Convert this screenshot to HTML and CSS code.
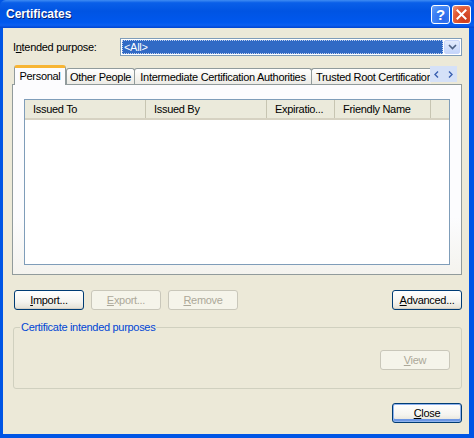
FILE: index.html
```html
<!DOCTYPE html>
<html lang="en">
<head>
    <meta charset="UTF-8">
    <title>Certificates</title>
    <link rel="stylesheet" href="styles.css">
</head>
<body>
    <div class="window">
        <div class="titlebar">
            <span class="title">Certificates</span>
            <div class="title-buttons">
                <span class="tbtn help">?</span>
                <span class="tbtn close">
                    <svg width="11" height="11" viewBox="0 0 11 11"><path d="M1.5 1.5 L9.5 9.5 M9.5 1.5 L1.5 9.5" stroke="#fff" stroke-width="2" stroke-linecap="square"/></svg>
                </span>
            </div>
        </div>

        <div class="content">
            <div class="purpose-row">
                <label class="purpose-label">I<u>n</u>tended purpose:</label>
                <div class="combo">
                    <div class="combo-value"><span>&lt;All&gt;</span></div>
                    <div class="combo-arrow">
                        <svg width="9" height="6" viewBox="0 0 9 6"><path d="M1 1 L4.5 4.5 L8 1" fill="none" stroke="#4d6185" stroke-width="1.6"/></svg>
                    </div>
                </div>
            </div>

            <div class="tabs">
                <div class="tab active t-personal">Personal</div>
                <div class="tab t-other">Other People</div>
                <div class="tab t-inter">Intermediate Certification Authorities</div>
                <div class="tab clipped">Trusted Root Certification</div>
                <div class="tab-scroll">
                    <span class="arrow">
                        <svg width="5" height="7" viewBox="0 0 5 7"><path d="M4 0.5 L1 3.5 L4 6.5" fill="none" stroke="#3a5fb0" stroke-width="1.4"/></svg>
                    </span>
                    <span class="arrow">
                        <svg width="5" height="7" viewBox="0 0 5 7"><path d="M1 0.5 L4 3.5 L1 6.5" fill="none" stroke="#3a5fb0" stroke-width="1.4"/></svg>
                    </span>
                </div>
            </div>
            <div class="tab-panel">
                <div class="listview">
                    <div class="list-header">
                        <div class="col c1">Issued To</div>
                        <div class="col c2">Issued By</div>
                        <div class="col c3">Expiratio...</div>
                        <div class="col c4">Friendly Name</div>
                        <div class="col c5"></div>
                    </div>
                </div>
            </div>

            <div class="button-row">
                <button class="btn"><u>I</u>mport...</button>
                <button class="btn" disabled><u>E</u>xport...</button>
                <button class="btn" disabled><u>R</u>emove</button>
                <span class="spacer"></span>
                <button class="btn"><u>A</u>dvanced...</button>
            </div>

            <fieldset class="group">
                <legend>Certificate intended purposes</legend>
                <div class="group-body">
                    <button class="btn" disabled><u>V</u>iew</button>
                </div>
            </fieldset>

            <div class="footer">
                <button class="btn default"><u>C</u>lose</button>
            </div>
        </div>
    </div>
</body>
</html>
```

FILE: styles.css
```css
body {
    margin: 0;
    padding: 0;
    font-family: Tahoma, "Liberation Sans", Arial, sans-serif;
    font-size: 11px;
    letter-spacing: -0.3px;
    color: #000;
    background: #0a3cc8;
}
.window {
    width: 474px;
    height: 438px;
    box-sizing: border-box;
    display: flex;
    flex-direction: column;
    background: #0055e5;
    padding: 0 5px 4px 3px;
}
.titlebar {
    height: 28px;
    margin: 0 -5px 0 -3px;
    padding: 0 6px 0 6px;
    display: flex;
    align-items: center;
    justify-content: space-between;
    background: linear-gradient(#3f8cf3 0%, #0a5fe8 10%, #0054e3 40%, #0058ee 80%, #0b5ff0 90%, #0044d0 100%);
    border-radius: 6px 6px 0 0;
}
.title {
    color: #fff;
    font-family: "Liberation Sans", Arial, sans-serif;
    font-weight: bold;
    font-size: 12px;
    letter-spacing: 0;
    text-shadow: 1px 1px 0 #0a1e6e;
}
.title-buttons {
    display: flex;
    gap: 2px;
    margin-right: -3px;
}
.tbtn {
    width: 19px;
    height: 19px;
    box-sizing: border-box;
    border: 1px solid #fff;
    border-radius: 3px;
    display: flex;
    align-items: center;
    justify-content: center;
    color: #fff;
    font-family: "Liberation Sans", Arial, sans-serif;
    font-weight: bold;
    font-size: 15px;
}
.tbtn.help {
    background: radial-gradient(circle at 70% 75%, #2a67e8, #3d82f5 60%, #6fa3f7);
}
.tbtn.close {
    background: radial-gradient(circle at 70% 75%, #c9381a, #e25b36 60%, #f09a7c);
}
.content {
    flex: 1;
    background: #ece9d8;
    padding: 0 7px 0 9px;
    display: flex;
    flex-direction: column;
}
.purpose-row {
    display: flex;
    align-items: center;
    margin-top: 10px;
    height: 18px;
}
.purpose-label {
    width: 107px;
    padding-left: 1px;
}
.combo {
    flex: 1;
    height: 18px;
    box-sizing: border-box;
    border: 1px solid #7f9db9;
    background: #fff;
    display: flex;
    padding: 1px;
}
.combo-value {
    flex: 1;
    background: #316ac5;
    color: #fff;
    display: flex;
    align-items: center;
    outline: 1px dotted #c0d0f0;
    outline-offset: -1px;
    padding-left: 2px;
}
.combo-arrow {
    width: 16px;
    margin-left: 1px;
    background: linear-gradient(#e3ebfd, #c4d5fa);
    border: 1px solid #c8d6fb;
    box-sizing: border-box;
    border-radius: 2px;
    display: flex;
    align-items: center;
    justify-content: center;
}
.tabs {
    display: flex;
    align-items: flex-end;
    margin-top: 9px;
    height: 19px;
    padding-left: 2px;
    position: relative;
    z-index: 1;
}
.tab {
    height: 16px;
    box-sizing: border-box;
    border: 1px solid #919b9c;
    border-bottom: none;
    border-radius: 3px 3px 0 0;
    background: linear-gradient(#fff, #f4f3ee 60%, #ecebe6);
    display: flex;
    align-items: center;
    justify-content: center;
    white-space: nowrap;
    margin-right: -1px;
}
.t-personal { width: 52px; }
.t-other { width: 69px; }
.t-inter { width: 178px; }
.tab.active {
    height: 20px;
    margin-bottom: -1px;
    padding-bottom: 2px;
    background: #fcfcfe;
    border-top: 3px solid #f7b534;
    margin-right: 0;
}
.tab.clipped {
    width: 120px;
    overflow: hidden;
    justify-content: flex-start;
    padding-left: 4px;
    border-right: none;
    border-radius: 3px 0 0 0;
}
.tab-scroll {
    display: flex;
    gap: 1px;
    height: 16px;
    align-self: flex-start;
    margin-top: 1px;
    background: #d5e1f8;
}
.arrow {
    width: 13px;
    height: 16px;
    display: flex;
    align-items: center;
    justify-content: center;
}
.tab-panel {
    height: 191px;
    box-sizing: border-box;
    border: 1px solid #919b9c;
    background: linear-gradient(#fcfcfe, #fcfcfe 70%, #f4f3ee);
    padding: 14px 11px 9px 11px;
}
.listview {
    height: 100%;
    box-sizing: border-box;
    border: 1px solid #7f9db9;
    background: #fff;
}
.list-header {
    display: flex;
    height: 18px;
    background: #ebeadb;
    border-bottom: 2px solid #d6d2c2;
}
.col {
    box-sizing: border-box;
    padding-left: 8px;
    display: flex;
    align-items: center;
    border-right: 1px solid #c7c5b2;
    white-space: nowrap;
    overflow: hidden;
}
.c1 { width: 121px; }
.c2 { width: 121px; }
.c3 { width: 68px; }
.c4 { width: 96px; }
.c5 { flex: 1; border-right: none; }
.button-row {
    display: flex;
    gap: 7px;
    margin-top: 15px;
    padding-left: 2px;
}
.spacer {
    flex: 1;
}
.btn {
    width: 70px;
    height: 20px;
    box-sizing: border-box;
    font-family: Tahoma, "Liberation Sans", Arial, sans-serif;
    font-size: 11px;
    letter-spacing: -0.3px;
    color: #000;
    border: 1px solid #003c74;
    border-radius: 3px;
    background: linear-gradient(#fff, #f5f4ef 60%, #e3e0d4);
    padding: 0;
    box-shadow: inset 0 -1px 0 #d6d0c5;
}
.btn:disabled {
    color: #aca899;
    border-color: #c9c7ba;
    background: #f5f4ea;
    box-shadow: none;
}
.btn.default {
    box-shadow: inset 0 0 0 1px #8eb2ee, inset 0 -2px 0 1px #6d97e4;
}
.group {
    margin: 11px 0 0 1px;
    padding: 0;
    height: 68px;
    box-sizing: border-box;
    border: 1px solid #d0d0bf;
    border-radius: 3px;
}
.group legend {
    color: #0046d5;
    padding: 0 1px;
    margin-left: 6px;
}
.group-body {
    display: flex;
    justify-content: flex-end;
    padding: 17px 11px 0 0;
}
.footer {
    display: flex;
    justify-content: flex-end;
    margin-top: 14px;
}
```
